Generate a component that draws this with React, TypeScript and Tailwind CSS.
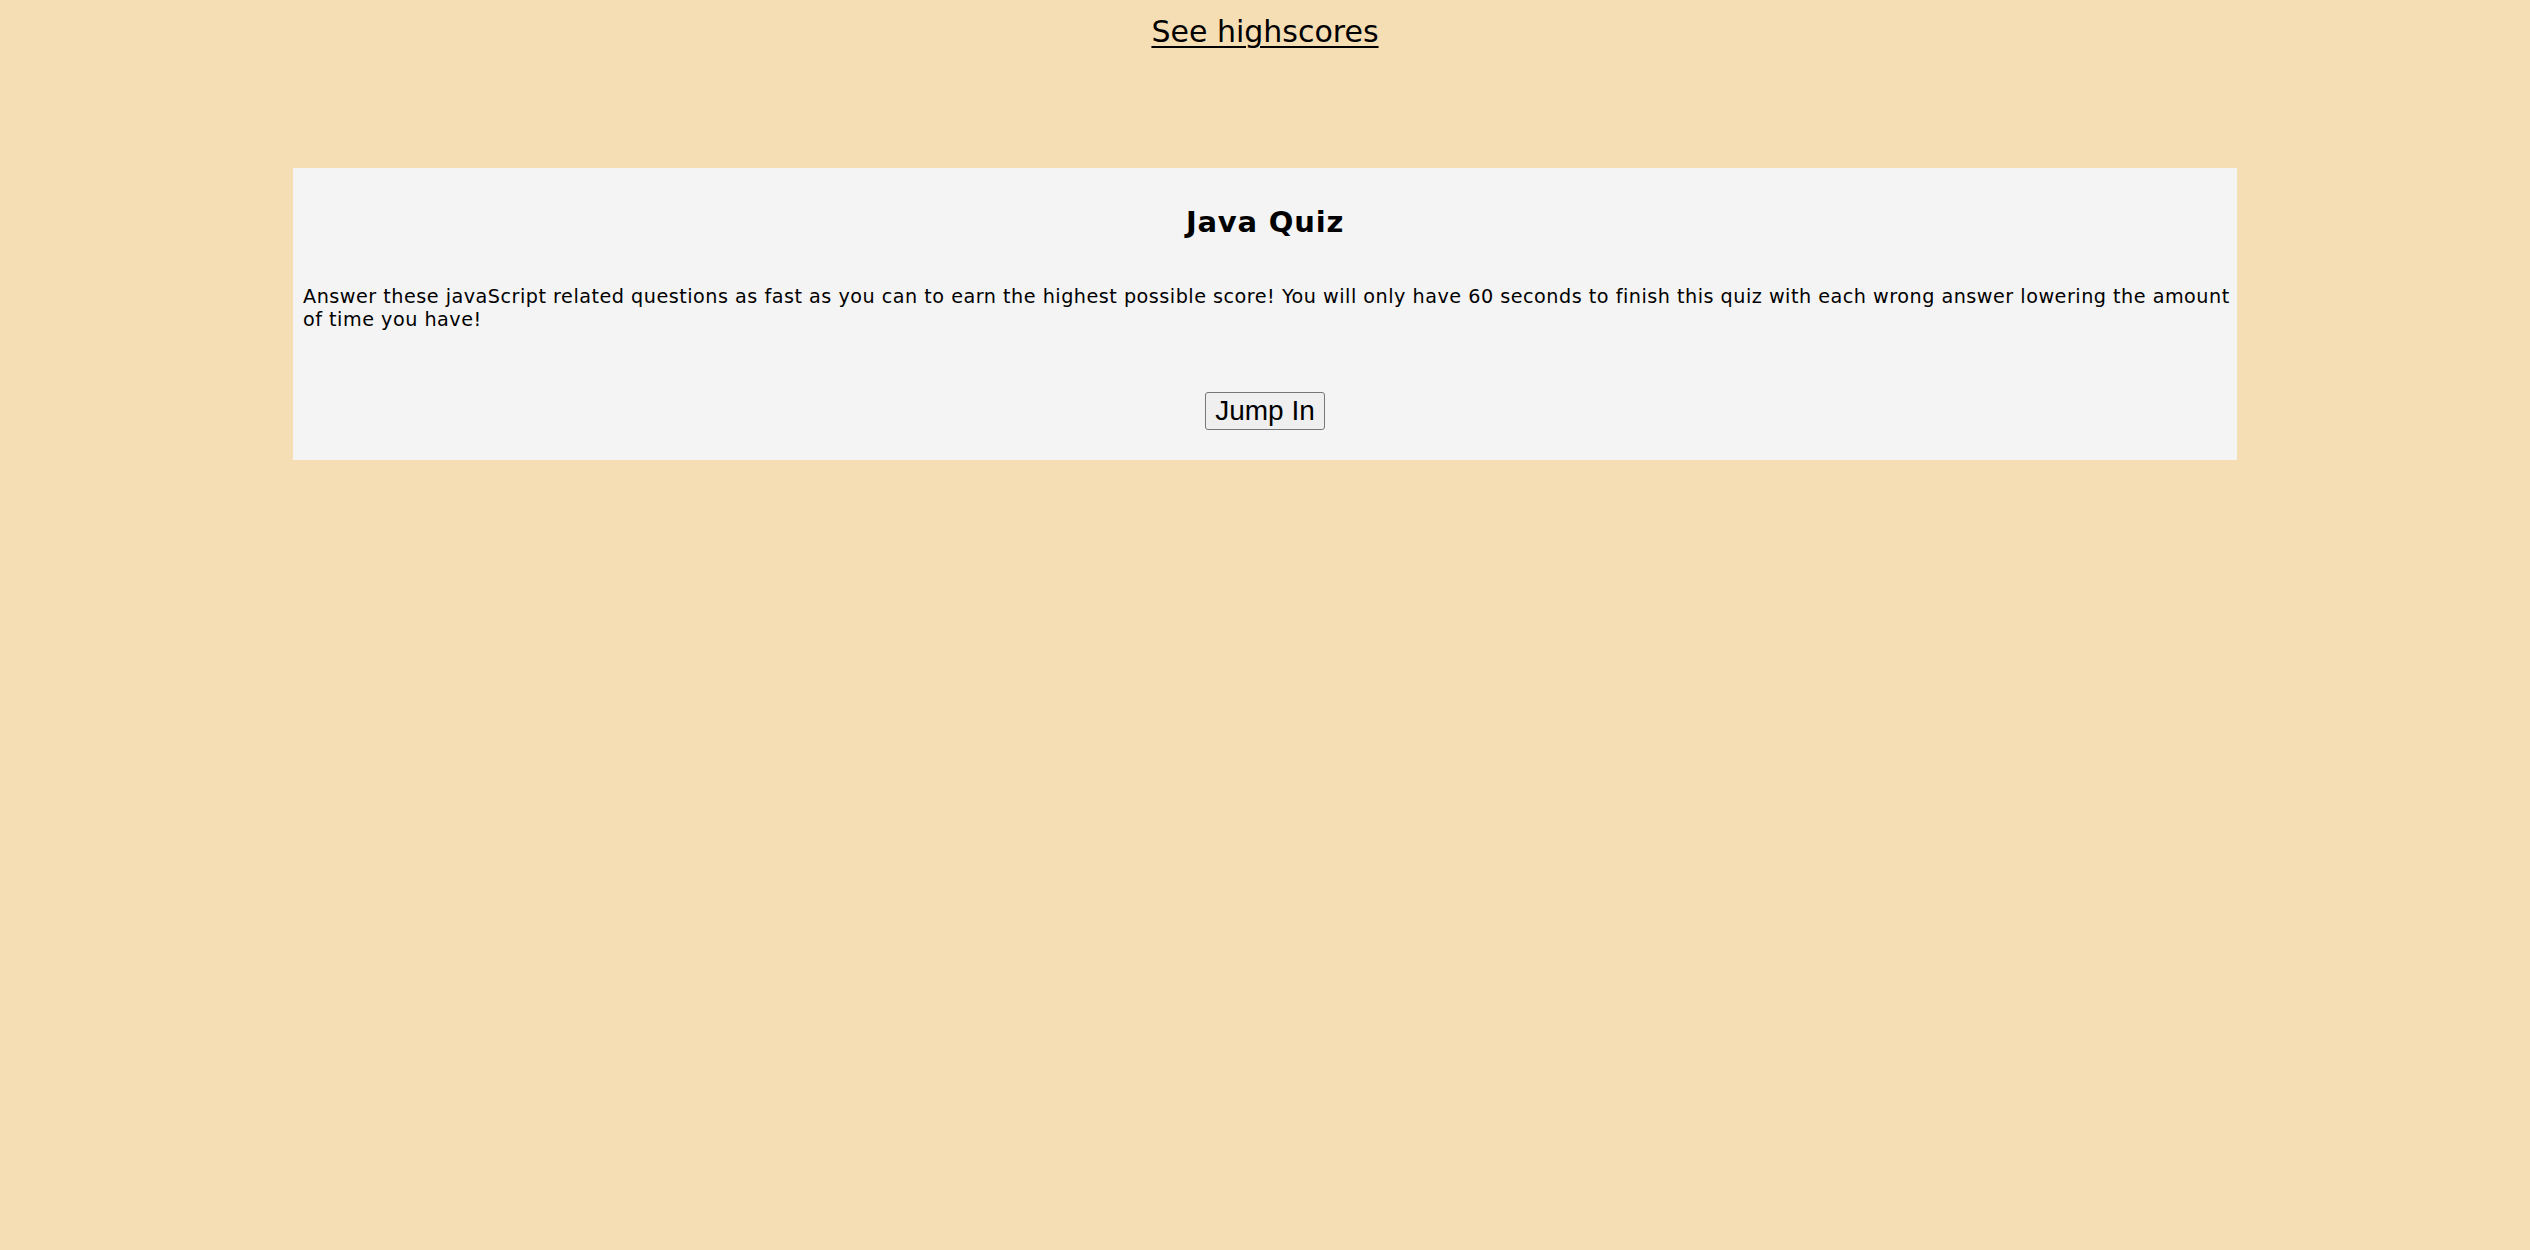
export default function App() {
  const verdana = { fontFamily: '"DejaVu Sans", Verdana, sans-serif' };

  return (
    <div className="min-h-[1250px] bg-[#f5deb3] text-black" style={verdana}>
      {/* highscores link */}
      <div className="pt-[14px] text-center">
        <a href="#" className="text-[30px] leading-[normal] underline decoration-[2px] underline-offset-[4px] text-black">
          See highscores
        </a>
      </div>

      {/* intro card */}
      <div className="mx-auto mt-[119px] w-[1944px] bg-[#f4f4f4] px-[10px] pt-[37px] pb-[30px]">
        <h2 className="text-center text-[29px] font-bold leading-[normal] tracking-[0.8px]">Java Quiz</h2>
        <p className="-mr-[4px] mt-[46px] text-[19.2px] leading-[23.3px] tracking-[0.5px]">
          Answer these javaScript related questions as fast as you can to earn the highest possible score! You will only have 60 seconds to finish this quiz with each wrong answer lowering the amount of time you have!
        </p>
        <div className="mt-[60px] flex justify-center">
          <button
            type="button"
            className="rounded-[3px] border-[1.6px] border-[#767676] bg-[#efefef] px-[9.6px] py-[2px] text-[28px] leading-[normal] text-black"
            style={{ fontFamily: '"Liberation Sans", Arial, sans-serif' }}
          >
            Jump In
          </button>
        </div>
      </div>
    </div>
  );
}
